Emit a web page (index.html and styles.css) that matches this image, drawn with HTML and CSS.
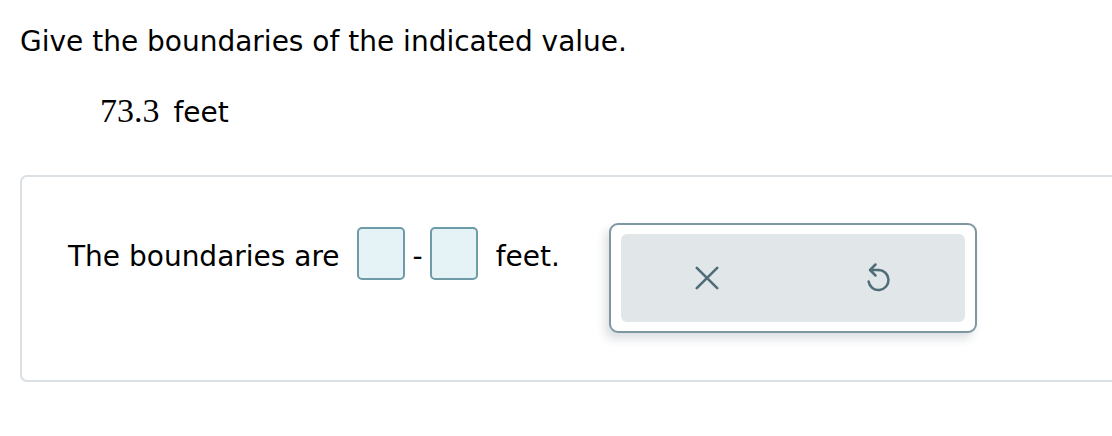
FILE: index.html
```html
<!DOCTYPE html>
<html>
<head>
<meta charset="utf-8">
<link rel="stylesheet" href="styles.css">
</head>
<body>
<div class="page">
  <p class="prompt">Give the boundaries of the indicated value.</p>
  <p class="value"><span class="num">73.3</span><span class="unit">feet</span></p>
  <div class="answer">
    <div class="sentence">
      <span class="label">The boundaries are</span>
      <span class="box"></span>
      <span class="dash">-</span>
      <span class="box"></span>
      <span class="label after">feet.</span>
    </div>
    <div class="tools">
      <div class="tools-inner">
        <button class="tool" aria-label="Clear">
          <svg width="24" height="24" viewBox="0 0 24 24"><path d="M1.8 1.8 L22.2 22.2 M22.2 1.8 L1.8 22.2" stroke="#4e6d79" stroke-width="2.6" stroke-linecap="round" fill="none"/></svg>
        </button>
        <button class="tool" aria-label="Undo">
          <svg width="28" height="32" viewBox="0 0 28 32"><path d="M13.5 8 A10 10 0 1 1 3.6 19.5" stroke="#4e6d79" stroke-width="2.5" stroke-linecap="round" fill="none"/><path d="M13.5 8 L5.5 8 M10.5 2.5 L5 8 L10.5 13.5" stroke="#4e6d79" stroke-width="2.5" stroke-linecap="round" stroke-linejoin="round" fill="none"/></svg>
        </button>
      </div>
    </div>
  </div>
</div>
</body>
</html>
```
FILE: styles.css
```css
html, body {
  margin: 0;
  padding: 0;
  background: #ffffff;
}
body {
  font-family: "DejaVu Sans", Verdana, sans-serif;
  color: #000;
  overflow: hidden;
}
.page {
  padding: 26px 0 0 20px;
}
.prompt {
  margin: 0;
  font-size: 28px;
  line-height: 32px;
}
.value {
  margin: 37px 0 0 80px;
  font-size: 28px;
  line-height: 32px;
}
.num {
  font-family: "Liberation Serif", "Times New Roman", serif;
  font-size: 34px;
}
.unit {
  margin-left: 14px;
}
.answer {
  margin-top: 46px;
  width: 1120px;
  height: 207px;
  border: 2px solid #dae0e3;
  border-right: none;
  border-radius: 7px 0 0 7px;
  box-sizing: border-box;
  display: flex;
  align-items: flex-start;
  padding: 46px 0 0 46px;
}
.sentence {
  display: flex;
  align-items: flex-start;
  font-size: 28px;
  line-height: 32px;
  margin-top: 4px;
}
.label {
  margin-top: 14px;
}
.box {
  width: 48px;
  height: 53px;
  margin-left: 17px;
  box-sizing: border-box;
  background: #e6f3f6;
  border: 2px solid #6d9ba8;
  border-radius: 5px;
}
.dash {
  margin: 14px 7px 0 8px;
}
.dash + .box {
  margin-left: 0;
}
.after {
  margin-left: 18px;
}
.tools {
  margin-left: 49px;
  width: 368px;
  height: 110px;
  flex: none;
  box-sizing: border-box;
  border: 2px solid #7f97a1;
  border-radius: 9px;
  padding: 9px 10px;
  background: #fff;
  box-shadow: -4px 6px 10px rgba(60, 80, 90, 0.18);
}
.tools-inner {
  height: 100%;
  background: #e1e6e9;
  border-radius: 6px;
  display: flex;
  justify-content: space-around;
  align-items: center;
}
.tool {
  background: none;
  border: none;
  padding: 0;
  display: flex;
  align-items: center;
  justify-content: center;
  width: 28px;
  height: 32px;
}
```
